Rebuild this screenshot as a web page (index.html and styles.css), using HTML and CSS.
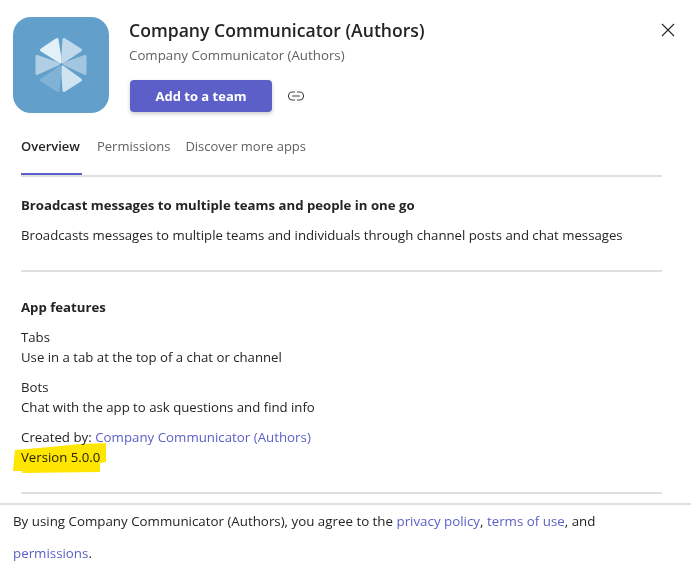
FILE: index.html
```html
<!DOCTYPE html>
<html lang="en">
<head>
<meta charset="utf-8">
<title>Company Communicator (Authors)</title>
<link rel="stylesheet" href="styles.css">
</head>
<body>
<div class="dialog">
  <header class="header">
    <svg class="app-icon" viewBox="0 0 96 96" aria-hidden="true">
      <rect width="96" height="96" rx="18" fill="#62a0cb"/>
      <g stroke-linejoin="round" stroke-width="3">
        <path d="M28.5 33 L44 22.5 L47.5 45 Z" fill="#e4f0f8" stroke="#e4f0f8"/>
        <path d="M51 22.5 L67.5 33 L49.5 45 Z" fill="#c0d9eb" stroke="#c0d9eb"/>
        <path d="M72 39.5 L72 56.5 L51.5 47 Z" fill="#a2c6e0" stroke="#a2c6e0"/>
        <path d="M67.5 63 L51 73.5 L49.5 50 Z" fill="#d0e3f1" stroke="#d0e3f1"/>
        <path d="M28.5 63 L45 73.5 L47.5 50 Z" fill="#80b2d6" stroke="#80b2d6"/>
        <path d="M24 39.5 L24 56.5 L45 47 Z" fill="#b0cfe5" stroke="#b0cfe5"/>
      </g>
    </svg>
    <div class="app-meta">
      <h1 class="app-title">Company Communicator (Authors)</h1>
      <p class="app-sub">Company Communicator (Authors)</p>
      <div class="actions">
        <button class="primary" type="button">Add to a team</button>
        <svg class="link-icon" viewBox="0 0 16 10" aria-hidden="true">
          <path d="M6.5 1H4.5a4 4 0 0 0 0 8H6.5M9.5 1H11.5a4 4 0 0 1 0 8H9.5M4.5 5H11.5" fill="none" stroke="#424242" stroke-width="1.1" stroke-linecap="round"/>
        </svg>
      </div>
    </div>
    <svg class="close" viewBox="0 0 14 14" aria-hidden="true">
      <path d="M1 1L13 13M13 1L1 13" stroke="#242424" stroke-width="1.1" fill="none"/>
    </svg>
  </header>

  <nav class="tabs">
    <span class="tab active">Overview</span>
    <span class="tab">Permissions</span>
    <span class="tab">Discover more apps</span>
  </nav>

  <section class="section intro">
    <h2 class="heading">Broadcast messages to multiple teams and people in one go</h2>
    <p class="body-line">Broadcasts messages to multiple teams and individuals through channel posts and chat messages</p>
  </section>

  <section class="section features">
    <h2 class="heading">App features</h2>
    <div class="feature">
      <div class="line">Tabs</div>
      <div class="line">Use in a tab at the top of a chat or channel</div>
    </div>
    <div class="feature">
      <div class="line">Bots</div>
      <div class="line">Chat with the app to ask questions and find info</div>
    </div>
    <div class="feature">
      <div class="line credit">Created by: <a class="link">Company Communicator (Authors)</a></div>
      <div class="line">
        <span class="version-text">Version 5.0.0</span>
        <svg class="highlight" viewBox="0 0 94 31" aria-hidden="true">
          <path d="M2 7 L37 4 L67 1 L93 0 L93 19 L87 20 L87 29 L9 30 L9 28 L0 28 Z" fill="#ffe600"/>
        </svg>
      </div>
    </div>
  </section>

  <footer class="footer">
    By using Company Communicator (Authors), you agree to the <a class="link">privacy policy</a>, <a class="link">terms of use</a>, and <a class="link">permissions</a>.
  </footer>
</div>
</body>
</html>
```

FILE: styles.css
```css
* { box-sizing: border-box; }
html, body { margin: 0; padding: 0; background: #fff; }
body {
  width: 691px;
  height: 562px;
  overflow: hidden;
  font-family: "Open Sans", "Noto Sans", sans-serif;
  font-size: 13.2px;
  color: #242424;
}
.dialog { display: flex; flex-direction: column; height: 562px; }
.dialog > * { flex: none; }
.header { display: flex; padding: 17px 16px 0 13px; height: 125px; }
.app-icon { width: 96px; height: 96px; flex: none; }
.app-meta { flex: 1; padding-left: 20px; }
.app-title { margin: 0; font-size: 17.6px; line-height: 26px; font-weight: 600; }
.app-sub { margin: 0; height: 25px; line-height: 24px; color: #616161; font-size: 13.3px; }
.actions { display: flex; align-items: center; gap: 16px; margin-top: 12px; margin-left: 1px; }
.primary {
  width: 142px;
  height: 32px;
  border: 0;
  border-radius: 4px;
  background: #5b5fc7;
  color: #fff;
  font: 700 13px "Open Sans", sans-serif;
  box-shadow: 0 2px 4px rgba(0, 0, 0, .2);
}
.link-icon { width: 16px; height: 10px; }
.close { width: 14px; height: 14px; margin-top: 6px; flex: none; }
.tabs {
  display: flex;
  gap: 15px;
  margin: 0 29px 0 21px;
  height: 52px;
  border-bottom: 2px solid #e0e0e0;
  padding-top: 8px;
  font-size: 13px;
}
.tab { color: #616161; line-height: 26px; height: 42px; }
.tab.active { color: #242424; font-weight: 600; border-bottom: 2px solid #5b5fc7; padding-right: 2px; }
.section { margin: 0 29px 0 21px; border-bottom: 2px solid #e0e0e0; }
.intro { height: 95px; padding-top: 18px; }
.heading { margin: 0; font-size: 13.2px; line-height: 20px; font-weight: 700; }
.body-line { margin: 10px 0 0; line-height: 20px; }
.features { height: 222px; padding-top: 25px; }
.feature { margin-top: 10px; }
.line { line-height: 20px; position: relative; }
.credit { font-size: 13.3px; }
.link { color: #5b5fc7; }
.version-text { position: relative; }
.highlight { position: absolute; left: -8px; top: -4px; width: 94px; height: 31px; mix-blend-mode: multiply; }
.footer {
  margin-top: 9px;
  border-top: 2px solid #e0e0e0;
  padding: 0 80px 0 13px;
  font-size: 13.33px;
  line-height: 32px;
  color: #242424;
}
```
